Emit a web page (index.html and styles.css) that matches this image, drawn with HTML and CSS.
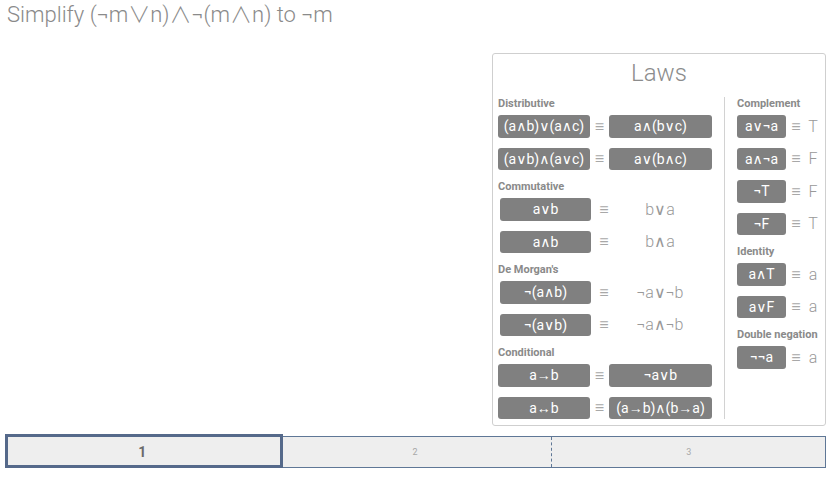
FILE: index.html
```html
<!DOCTYPE html>
<html>
<head>
<meta charset="utf-8">
<link rel="stylesheet" href="styles.css">
</head>
<body>
<h1 class="title">Simplify (¬m∨n)∧¬(m∧n) to ¬m</h1>
<div class="workspace">
  <section class="laws">
    <div class="laws-title">Laws</div>
    <div class="laws-cols">
      <div class="col-left">
        <div class="group-name">Distributive</div>
        <div class="law law-pair"><span class="btn">(a∧b)∨(a∧c)</span><span class="eq">≡</span><span class="btn">a∧(b∨c)</span></div>
        <div class="law law-pair"><span class="btn">(a∨b)∧(a∨c)</span><span class="eq">≡</span><span class="btn">a∨(b∧c)</span></div>
        <div class="group-name">Commutative</div>
        <div class="law law-text"><span class="btn">a∨b</span><span class="eq">≡</span><span class="val">b∨a</span></div>
        <div class="law law-text"><span class="btn">a∧b</span><span class="eq">≡</span><span class="val">b∧a</span></div>
        <div class="group-name">De Morgan's</div>
        <div class="law law-text"><span class="btn">¬(a∧b)</span><span class="eq">≡</span><span class="val">¬a∨¬b</span></div>
        <div class="law law-text"><span class="btn">¬(a∨b)</span><span class="eq">≡</span><span class="val">¬a∧¬b</span></div>
        <div class="group-name">Conditional</div>
        <div class="law law-pair"><span class="btn">a→b</span><span class="eq">≡</span><span class="btn">¬a∨b</span></div>
        <div class="law law-pair"><span class="btn">a↔b</span><span class="eq">≡</span><span class="btn">(a→b)∧(b→a)</span></div>
      </div>
      <div class="col-right">
        <div class="group-name">Complement</div>
        <div class="law law-small"><span class="btn">a∨¬a</span><span class="eq">≡</span><span class="val">T</span></div>
        <div class="law law-small"><span class="btn">a∧¬a</span><span class="eq">≡</span><span class="val">F</span></div>
        <div class="law law-small"><span class="btn">¬T</span><span class="eq">≡</span><span class="val">F</span></div>
        <div class="law law-small"><span class="btn">¬F</span><span class="eq">≡</span><span class="val">T</span></div>
        <div class="group-name">Identity</div>
        <div class="law law-small"><span class="btn">a∧T</span><span class="eq">≡</span><span class="val">a</span></div>
        <div class="law law-small"><span class="btn">a∨F</span><span class="eq">≡</span><span class="val">a</span></div>
        <div class="group-name">Double negation</div>
        <div class="law law-small"><span class="btn">¬¬a</span><span class="eq">≡</span><span class="val">a</span></div>
      </div>
    </div>
  </section>
</div>
<div class="steps">
  <div class="step step-active">1</div>
  <div class="step step-dashed">2</div>
  <div class="step">3</div>
</div>
</body>
</html>
```
FILE: styles.css
```css
html, body {
  margin: 0;
  padding: 0;
  background: #fff;
  font-family: Roboto, "Liberation Sans", "DejaVu Sans", sans-serif;
}

.title {
  margin: 0;
  padding-left: 7px;
  font-family: Roboto, "Noto Sans CJK JP", sans-serif;
  font-size: 22px;
  line-height: 30px;
  font-weight: 300;
  color: #8a8a8a;
}

.workspace {
  display: flex;
  justify-content: flex-end;
  padding-right: 9px;
  margin-top: 23px;
}

.laws {
  box-sizing: border-box;
  width: 334px;
  border: 1px solid #cfcfcf;
  border-radius: 3px;
  padding: 0 5px 6px 5px;
}

.laws-title {
  text-align: center;
  font-size: 24px;
  font-weight: 300;
  line-height: 39px;
  padding-bottom: 4px;
  color: #8c8c8c;
}

.laws-cols {
  display: flex;
}

.col-left {
  width: 226px;
}

.col-right {
  flex: 1;
  border-left: 1px solid #d2d2d2;
  padding-left: 12px;
}

.group-name {
  font-size: 11px;
  font-weight: 700;
  line-height: 14px;
  color: #8a8a8a;
  margin-top: 10px;
}

.group-name:first-child {
  margin-top: 0;
}

.law {
  display: grid;
  height: 22.5px;
  margin-top: 10px;
  align-items: center;
}

.group-name + .law {
  margin-top: 4px;
}

.law-pair {
  grid-template-columns: 92px 19px 103px;
}

.law-text {
  grid-template-columns: 91px 26px 86px;
  padding-left: 2px;
}

.law-small {
  grid-template-columns: 49px 20px 14px;
}

.btn {
  display: block;
  height: 22.5px;
  line-height: 22.5px;
  background: #808080;
  color: #fff;
  border-radius: 3px;
  text-align: center;
  font-family: Roboto, "Liberation Sans", "DejaVu Sans", sans-serif;
  font-size: 14px;
  white-space: nowrap;
}

.eq {
  text-align: center;
  font-size: 16px;
  color: #a8a8a8;
  font-family: "DejaVu Sans", sans-serif;
  font-weight: 200;
}

.val {
  text-align: center;
  font-family: Roboto, "Liberation Sans", "DejaVu Sans", sans-serif;
  font-size: 16px;
  font-weight: 300;
  color: #999;
}

.steps {
  display: flex;
  box-sizing: border-box;
  margin: 10px 9px 0 5px;
  height: 32px;
  border: 1px solid #5f7796;
  background: #eeeeee;
}

.step {
  flex: 1;
  display: flex;
  align-items: center;
  justify-content: center;
  font-size: 9px;
  color: #a8a8a8;
}

.step-dashed {
  border-right: 1px dashed #5f7796;
}

.step-active {
  position: relative;
  font-size: 14px;
  font-weight: 700;
  color: #6a6a6a;
}

.step-active::after {
  content: "";
  position: absolute;
  top: -3px;
  bottom: -1px;
  left: -1px;
  right: -4px;
  border: 3px solid #55698a;
}
```
